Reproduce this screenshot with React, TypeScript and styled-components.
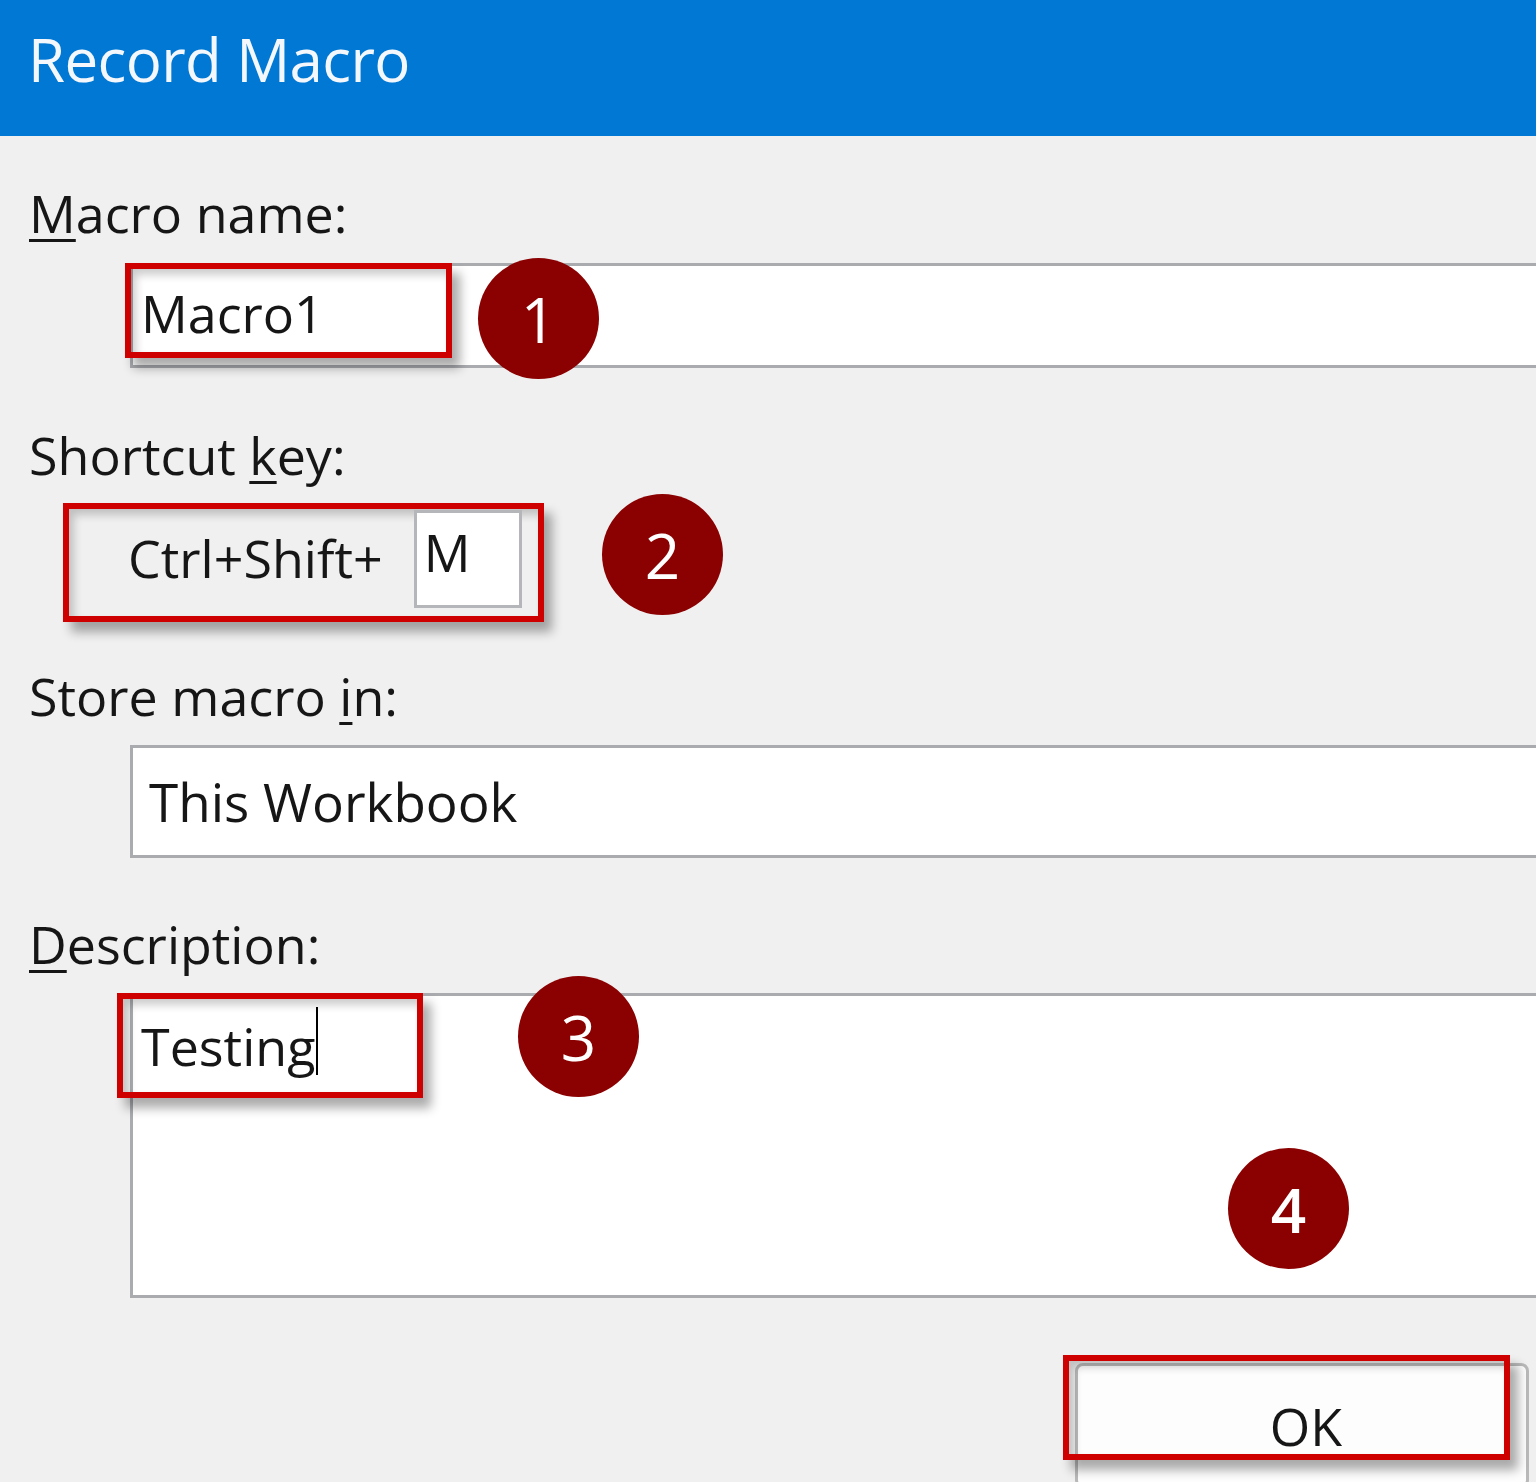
import React from 'react'
import styled, {createGlobalStyle, css} from 'styled-components'

const GlobalStyle = createGlobalStyle`
  html, body {
    margin: 0;
    padding: 0;
    background: #f0f0f0;
  }
  body {
    font-family: 'Open Sans', 'Noto Sans', sans-serif;
    color: #161616;
  }
`

const App: React.FC = () => {
  return (
    <>
      <GlobalStyle />
      <Dialog>
        <TitleBar>Record Macro</TitleBar>
        <Body>
          <Label $top={0}>
            <u>M</u>acro name:
          </Label>
          <TextBox $top={20} $height={105}>
            <Highlight $dx={-8} $dy={-3} $w={327} $h={95} $pad={10}>
              <FieldText $nudge={4}>Macro1</FieldText>
            </Highlight>
            <Marker $left={345} $top={-8}>1</Marker>
          </TextBox>

          <Label $top={57}>
            Shortcut <u>k</u>ey:
          </Label>
          <ShortcutFrame>
            <ShortcutText>Ctrl+Shift+</ShortcutText>
            <KeyBox>M</KeyBox>
            <Marker $left={533} $top={-15}>2</Marker>
          </ShortcutFrame>

          <Label $top={44}>
            Store macro <u>i</u>n:
          </Label>
          <TextBox $top={19} $height={113}>
            <StoreText>This Workbook</StoreText>
          </TextBox>

          <Label $top={56}>
            <u>D</u>escription:
          </Label>
          <TextBox $top={19} $height={305} $align="flex-start">
            <Highlight $dx={-16} $dy={-3} $w={306} $h={105} $pad={18}>
              <FieldText>Testing</FieldText>
              <Caret />
            </Highlight>
            <Marker $left={385} $top={-20}>3</Marker>
            <Marker $left={1095} $top={152} $heavy>
              4
            </Marker>
          </TextBox>

          <ButtonRow>
            <DialogButton>
              OK
              <OverlayHighlight />
            </DialogButton>
          </ButtonRow>
        </Body>
      </Dialog>
    </>
  )
}

export default App

const Dialog = styled.div`
  width: 1536px;
  height: 1482px;
  overflow: hidden;
  display: flex;
  flex-direction: column;
  background: #f0f0f0;
`

const TitleBar = styled.div`
  flex-shrink: 0;
  height: 136px;
  box-sizing: border-box;
  padding: 19px 0 0 28px;
  background: #0078d4;
  color: #f4f8fc;
  font-size: 60px;
  line-height: 80px;
  letter-spacing: -0.6px;
  white-space: nowrap;
`

const Body = styled.div`
  display: flex;
  flex-direction: column;
  align-items: flex-start;
  padding: 47px 0 0 29px;
`

const Label = styled.div<{$top: number}>`
  margin-top: ${p => p.$top}px;
  height: 60px;
  font-size: 52px;
  line-height: 60px;
  white-space: nowrap;

  u {
    text-decoration-thickness: 3px;
    text-underline-offset: 6px;
  }
`

const TextBox = styled.div<{$top: number; $height: number; $align?: string}>`
  position: relative;
  align-self: stretch;
  box-sizing: border-box;
  height: ${p => p.$height}px;
  margin: ${p => p.$top}px -40px 0 101px;
  border: 3px solid #a9abaf;
  background: #fff;
  display: flex;
  align-items: ${p => p.$align ?? 'center'};
`

// red annotation frame drawn on top of the screenshot
const frame = css`
  box-sizing: border-box;
  border: 6px solid #cf0000;
  box-shadow:
    8px 10px 10px rgba(0, 0, 0, 0.33),
    inset 5px 6px 9px rgba(0, 0, 0, 0.2);
`

const Highlight = styled.div<{
  $dx: number
  $dy: number
  $w: number
  $h: number
  $pad: number
}>`
  ${frame};
  flex-shrink: 0;
  align-self: flex-start;
  width: ${p => p.$w}px;
  height: ${p => p.$h}px;
  margin: ${p => p.$dy}px 0 0 ${p => p.$dx}px;
  padding-left: ${p => p.$pad}px;
  display: flex;
  align-items: center;
`

const OverlayHighlight = styled.span`
  ${frame};
  position: absolute;
  left: -15px;
  top: -11px;
  width: 447px;
  height: 105px;
  pointer-events: none;
`

const FieldText = styled.span<{$nudge?: number}>`
  padding-top: ${p => p.$nudge ?? 0}px;
  font-size: 52px;
  line-height: 60px;
  white-space: nowrap;
`

const Caret = styled.span`
  width: 2px;
  height: 68px;
  margin: 0 0 10px 1px;
  background: #000;
`

const StoreText = styled.span`
  padding-left: 16px;
  font-size: 53px;
  line-height: 60px;
  white-space: nowrap;
`

const ShortcutFrame = styled.div`
  ${frame};
  position: relative;
  width: 481px;
  height: 119px;
  margin: 18px 0 0 34px;
  padding-left: 59px;
  display: flex;
  align-items: flex-start;
`

const ShortcutText = styled.span`
  margin-top: 19px;
  font-size: 52px;
  line-height: 60px;
  white-space: nowrap;
`

const KeyBox = styled.div`
  box-sizing: border-box;
  flex-shrink: 0;
  width: 108px;
  height: 98px;
  margin: 1px 0 0 31px;
  padding: 9px 0 0 7px;
  border: 3px solid #b4b6ba;
  background: #fff;
  font-size: 52px;
  line-height: 60px;
`

const Marker = styled.div<{$left: number; $top: number; $heavy?: boolean}>`
  position: absolute;
  left: ${p => p.$left}px;
  top: ${p => p.$top}px;
  width: 121px;
  height: 121px;
  border-radius: 50%;
  background: #8b0000;
  color: #fff;
  display: flex;
  align-items: center;
  justify-content: center;
  font-size: 62px;
  font-weight: ${p => (p.$heavy ? 600 : 400)};
  line-height: 1;
`

const ButtonRow = styled.div`
  display: flex;
  margin-top: 65px;
  padding-left: 1046px;
`

const DialogButton = styled.div`
  position: relative;
  flex-shrink: 0;
  box-sizing: border-box;
  width: 454px;
  height: 125px;
  padding-left: 8px;
  border: 3px solid #b9b9b9;
  border-radius: 8px;
  background: #fdfdfd;
  display: flex;
  align-items: center;
  justify-content: center;
  font-size: 52px;
  line-height: 60px;
`
